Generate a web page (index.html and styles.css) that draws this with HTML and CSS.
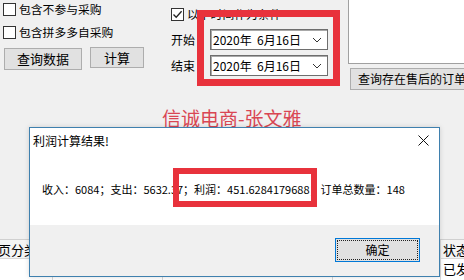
FILE: index.html
```html
<!DOCTYPE html>
<html lang="zh-CN">
<head>
<meta charset="utf-8">
<title>利润计算</title>
<link rel="stylesheet" href="styles.css">
</head>
<body>
<div class="app">
  <div class="top">
    <div class="col-left">
      <label class="check-row"><span class="cb"></span>包含不参与采购</label>
      <label class="check-row"><span class="cb"></span>包含拼多多自采购</label>
      <div class="btn-row">
        <button class="btn btn-query">查询数据</button>
        <button class="btn btn-calc">计算</button>
      </div>
    </div>
    <div class="col-mid">
      <label class="check-row check-cond"><span class="cb"><svg width="11" height="11" viewBox="0 0 11 11"><path d="M1.5 5.5 L4.2 8.3 L9.6 2.2" fill="none" stroke="#222" stroke-width="1.3"/></svg></span>以下时间作为条件</label>
      <div class="date-row">
        <span class="date-label">开始</span>
        <div class="date"><span class="date-text">2020年&nbsp;&nbsp;6月16日</span><svg class="chev" width="10" height="6" viewBox="0 0 10 6"><path d="M1 1 L5 5 L9 1" fill="none" stroke="#333" stroke-width="1"/></svg></div>
      </div>
      <div class="date-row">
        <span class="date-label">结束</span>
        <div class="date"><span class="date-text">2020年&nbsp;&nbsp;6月16日</span><svg class="chev" width="10" height="6" viewBox="0 0 10 6"><path d="M1 1 L5 5 L9 1" fill="none" stroke="#333" stroke-width="1"/></svg></div>
      </div>
    </div>
    <div class="col-right">
      <div class="list-box"></div>
      <button class="btn btn-after">查询存在售后的订单</button>
    </div>
  </div>
  <div class="grid">
    <div class="cell head first">页分类</div>
    <div class="cell head">商品名称</div>
    <div class="cell head">规格</div>
    <div class="cell head">数量</div>
    <div class="cell head">状态</div>
    <div class="cell first"></div>
    <div class="cell"></div>
    <div class="cell">1111111111</div>
    <div class="cell">1111111111 黄</div>
    <div class="cell">已发货</div>
  </div>
</div>

<div class="watermark">信诚电商-张文雅</div>

<div class="dialog">
  <div class="dlg-title">
    <span>利润计算结果!</span>
    <svg class="close" width="11" height="11" viewBox="0 0 11 11"><path d="M0.5 0.5 L10.5 10.5 M10.5 0.5 L0.5 10.5" stroke="#111" stroke-width="1"/></svg>
  </div>
  <div class="dlg-body">收入：6084；支出：5632.37；利润：451.6284179688；订单总数量：148</div>
  <div class="dlg-footer">
    <button class="btn btn-ok"><span class="focus">确定</span></button>
  </div>
</div>

<div class="mark mark-date"></div>
<div class="mark mark-profit"></div>
</body>
</html>
```

FILE: styles.css
```css
* { box-sizing: border-box; }

html, body {
  margin: 0;
  padding: 0;
  width: 464px;
  height: 280px;
  overflow: hidden;
  background: #f0f0f0;
  font-family: "Noto Sans CJK SC", "Microsoft YaHei", sans-serif;
  font-size: 12px;
  color: #000;
}

.app {
  width: 464px;
  height: 280px;
  overflow: hidden;
}

.top {
  display: flex;
  height: 90px;
}

/* left column */
.col-left {
  width: 155px;
  padding-left: 3px;
  display: flex;
  flex-direction: column;
  gap: 5px;
}

.check-row {
  display: flex;
  align-items: center;
  gap: 3px;
  height: 18px;
  line-height: 18px;
  white-space: nowrap;
  font-size: 11.8px;
}

.cb {
  width: 13px;
  height: 13px;
  border: 1px solid #333;
  background: #fff;
  display: flex;
  align-items: center;
  justify-content: center;
  flex: none;
}

.btn-row {
  display: flex;
  align-items: flex-start;
  gap: 8px;
  margin-top: 1px;
  padding-left: 1px;
}

.btn {
  font-family: inherit;
  font-size: 13px;
  color: #000;
  background: #e1e1e1;
  border: 1px solid #adadad;
  padding: 0;
  line-height: 20px;
  margin: 0;
}

.btn-query {
  width: 78px;
  height: 22px;
  margin-top: 1px;
}

.btn-calc {
  width: 54px;
  height: 21px;
}

/* middle column */
.col-mid {
  width: 193px;
  padding-left: 16px;
  padding-top: 5px;
  display: flex;
  flex-direction: column;
}

.date-row {
  display: flex;
  align-items: center;
  height: 21px;
  margin-top: 6px;
}

.date-row + .date-row {
  margin-top: 5px;
}

.date-label {
  width: 39px;
  font-size: 12px;
}

.date {
  width: 118px;
  height: 21px;
  background: #fff;
  border: 1px solid #6e6e6e;
  box-shadow: inset 1px 1px 0 #a8a8a8;
  display: flex;
  align-items: center;
  justify-content: space-between;
  padding: 0 5px 0 2px;
  white-space: nowrap;
}

.date-text {
  line-height: 18px;
}

.chev {
  flex: none;
}

/* right column */
.col-right {
  width: 116px;
  display: flex;
  flex-direction: column;
  overflow: visible;
}

.list-box {
  width: 140px;
  height: 64px;
  background: #fff;
  border-left: 1px solid #a0a0a0;
  border-bottom: 1px solid #a0a0a0;
}

.btn-after {
  width: 130px;
  height: 22px;
  margin-top: 4px;
  margin-left: 2px;
  text-align: left;
  padding-left: 7px;
  white-space: nowrap;
  font-size: 12px;
}

/* data grid behind dialog */
.grid {
  margin-top: 149px;
  display: grid;
  grid-template-columns: 53px 110px 170px 108px 60px;
  grid-template-rows: 19px 23px;
  width: 502px;
  border-top: 1px solid #d0d0d0;
  background: #fff;
}

.cell {
  border-right: 1px solid #d8d8d8;
  border-bottom: 1px solid #d8d8d8;
  padding-left: 2px;
  white-space: nowrap;
  overflow: hidden;
  line-height: 20px;
  font-size: 13px;
}

.cell.head {
  background: #f4f4f4;
  line-height: 19px;
}

.cell.first {
  text-indent: -4px;
}

/* watermark */
.watermark {
  position: absolute;
  left: 162px;
  top: 108px;
  font-size: 19px;
  line-height: 19px;
  color: #d94653;
  white-space: nowrap;
}

/* dialog */
.dialog {
  position: absolute;
  left: 29px;
  top: 127px;
  width: 411px;
  height: 150px;
  border: 1px solid #3f80ae;
  background: #fff;
  display: flex;
  flex-direction: column;
  box-shadow: 0 0 5px rgba(0, 0, 0, 0.15);
}

.dlg-title {
  height: 25px;
  padding: 0 10px 0 3px;
  display: flex;
  align-items: center;
  justify-content: space-between;
  font-size: 12px;
}

.dlg-body {
  height: 72px;
  padding-left: 12px;
  display: flex;
  align-items: center;
  white-space: nowrap;
  font-size: 11px;
}

.dlg-footer {
  flex: 1;
  background: #f0f0f0;
  display: flex;
  justify-content: flex-end;
  align-items: flex-start;
  padding: 13px 19px 0 0;
}

.btn-ok {
  width: 85px;
  height: 24px;
  border: 1px solid #0078d7;
  padding: 1px;
  font-size: 12px;
}

.focus {
  display: flex;
  align-items: center;
  justify-content: center;
  width: 100%;
  height: 100%;
  border: 1px dotted #222;
}

/* red highlight boxes */
.mark {
  position: absolute;
  border: 7px solid #e8323c;
}

.mark-date {
  left: 197px;
  top: 10px;
  width: 143px;
  height: 76px;
}

.mark-profit {
  left: 173px;
  top: 168px;
  width: 144px;
  height: 39px;
  border-width: 6px;
}
```
